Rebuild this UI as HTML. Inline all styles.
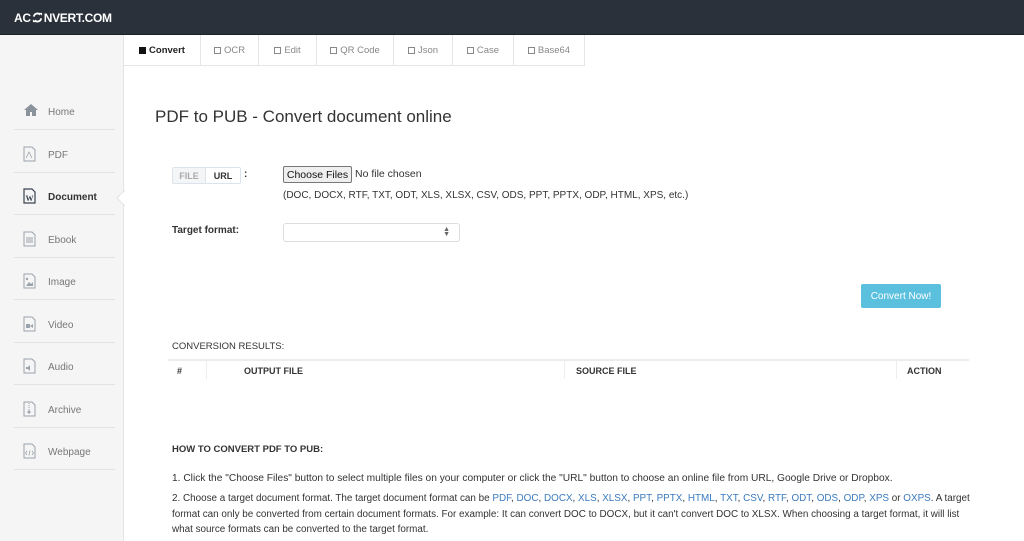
<!DOCTYPE html>
<html><head><meta charset="utf-8"><style>
*{box-sizing:border-box;margin:0;padding:0}
body{width:1024px;height:541px;overflow:hidden;background:#fff;font-family:"Liberation Sans",sans-serif;color:#333;position:relative}
.hdr{position:absolute;left:0;top:0;width:1024px;height:35px;background:#2a313b;border-bottom:1px solid #1c2128}
.logo{position:absolute;left:14px;top:11px;color:#fff;font-weight:bold;font-size:12px;letter-spacing:-0.3px}
.side{position:absolute;left:0;top:35px;width:124px;height:506px;background:#f5f5f5;border-right:1px solid #e4e4e4}
.item{position:absolute;left:14px;width:101px;height:42px;border-bottom:1px solid #e2e2e2;font-size:10px;color:#777}
.item span{position:absolute;left:34px;top:19px}
.item svg{position:absolute;left:9px;top:15px}
.item.act{color:#333;font-weight:bold}
.tabs{position:absolute;left:124px;top:35px;height:31px;border-bottom:1px solid #e6e6e6;display:flex;border-right:1px solid #e6e6e6}
.tab{height:30px;border-right:1px solid #e6e6e6;font-size:9.5px;color:#888;display:flex;align-items:center;justify-content:center}
.tab i{display:inline-block;width:7px;height:7px;border:1px solid #888;margin-right:3px}
.tab.act{color:#222;font-weight:bold}
.tab.act i{background:#111;border-color:#111}
h1{position:absolute;left:155px;top:107px;font-weight:normal;font-size:17px;color:#333}
.t{position:absolute;font-size:10px;white-space:nowrap}
a{color:#3b7bbf;text-decoration:none}
</style></head><body>
<div class="hdr"><div class="logo">AC<svg width="11" height="11" viewBox="0 0 12 12" style="vertical-align:-1px;margin:0 1px"><path d="M2 5a4 4 0 0 1 7-2M10 7a4 4 0 0 1-7 2" stroke="#fff" stroke-width="2" fill="none"/><path d="M8 1l3 0 0 3zM4 11l-3 0 0-3z" fill="#fff"/></svg>NVERT.COM</div></div>
<div class="side">
<div class="item" style="top:53px;border-top:0"><svg width="16" height="14" viewBox="0 0 16 14"><path d="M8 1L1 7h2v6h4V9h2v4h4V7h2z" fill="#8a929c"/></svg><span>Home</span></div>
<div class="item" style="top:96px"><svg width="13" height="16" viewBox="0 0 13 16"><path d="M1 1h8l3 3v11H1z" fill="none" stroke="#9aa2ab"/><path d="M3 12l3-6 3 6" fill="none" stroke="#9aa2ab" stroke-width=".8"/></svg><span>PDF</span></div>
<div class="item act" style="top:138px"><svg width="13" height="16" viewBox="0 0 13 16"><path d="M1 1h8l3 3v11H1z" fill="none" stroke="#3a4350" stroke-width="1.2"/><text x="2.5" y="13" font-size="8" font-family="Liberation Serif" fill="#3a4350">W</text></svg><span>Document</span></div>
<div class="item" style="top:181px"><svg width="13" height="16" viewBox="0 0 13 16"><path d="M1 1h8l3 3v11H1z" fill="none" stroke="#9aa2ab"/><path d="M3 7h7M3 9h7M3 11h7" stroke="#9aa2ab"/></svg><span>Ebook</span></div>
<div class="item" style="top:223px"><svg width="13" height="16" viewBox="0 0 13 16"><path d="M1 1h8l3 3v11H1z" fill="none" stroke="#9aa2ab"/><path d="M3 13l3-4 2 2 2-2v4z" fill="#9aa2ab"/><circle cx="4" cy="6" r="1.2" fill="#9aa2ab"/></svg><span>Image</span></div>
<div class="item" style="top:266px"><svg width="13" height="16" viewBox="0 0 13 16"><path d="M1 1h8l3 3v11H1z" fill="none" stroke="#9aa2ab"/><rect x="3" y="8" width="4" height="4" fill="#9aa2ab"/><path d="M7 10l3-2v4z" fill="#9aa2ab"/></svg><span>Video</span></div>
<div class="item" style="top:308px"><svg width="13" height="16" viewBox="0 0 13 16"><path d="M1 1h8l3 3v11H1z" fill="none" stroke="#9aa2ab"/><path d="M3 9h2l2-2v6l-2-2H3z" fill="#9aa2ab"/></svg><span>Audio</span></div>
<div class="item" style="top:351px"><svg width="13" height="16" viewBox="0 0 13 16"><path d="M1 1h8l3 3v11H1z" fill="none" stroke="#9aa2ab"/><path d="M6 2v7" stroke="#9aa2ab" stroke-dasharray="1 1"/><circle cx="6" cy="11" r="1.5" fill="#9aa2ab"/></svg><span>Archive</span></div>
<div class="item" style="top:393px"><svg width="13" height="16" viewBox="0 0 13 16"><path d="M1 1h8l3 3v11H1z" fill="none" stroke="#9aa2ab"/><path d="M4 8l-1.5 2 1.5 2M9 8l1.5 2L9 12M7 7.5l-1 5" fill="none" stroke="#9aa2ab" stroke-width=".8"/></svg><span>Webpage</span></div>
</div>
<svg style="position:absolute;left:116px;top:190px" width="9" height="16"><path d="M9 0L1 8l8 8z" fill="#fff"/><path d="M9 0L1 8l8 8" fill="none" stroke="#e4e4e4"/></svg>
<div class="tabs">
<div class="tab act" style="width:77px"><i></i>Convert</div>
<div class="tab" style="width:58px"><i></i>OCR</div>
<div class="tab" style="width:58px"><i></i>Edit</div>
<div class="tab" style="width:77px"><i></i>QR Code</div>
<div class="tab" style="width:59px"><i></i>Json</div>
<div class="tab" style="width:61px"><i></i>Case</div>
<div class="tab" style="width:70px;border-right:0"><i></i>Base64</div>
</div>
<h1>PDF to PUB - Convert document online</h1>
<div style="position:absolute;left:172px;top:167px;width:69px;height:17px;border:1px solid #dde3ea;border-radius:2px;font-size:9px;font-weight:bold;display:flex">
<div style="width:33px;background:#f3f5f7;color:#aaa;display:flex;align-items:center;justify-content:center;border-right:1px solid #dde3ea">FILE</div>
<div style="flex:1;color:#333;display:flex;align-items:center;justify-content:center">URL</div></div>
<div class="t" style="left:244px;top:169px;font-weight:bold">:</div>
<div style="position:absolute;left:283px;top:166px;width:69px;height:17px;border:1px solid #777;border-radius:2px;background:#efefef;font-size:10.5px;display:flex;align-items:center;justify-content:center;color:#111">Choose Files</div>
<div class="t" style="left:355px;top:168px;font-size:10.5px">No file chosen</div>
<div class="t" style="left:283px;top:190px;font-size:10px">(DOC, DOCX, RTF, TXT, ODT, XLS, XLSX, CSV, ODS, PPT, PPTX, ODP, HTML, XPS, etc.)</div>
<div class="t" style="left:172px;top:225px;font-weight:bold;font-size:10px">Target format:</div>
<div style="position:absolute;left:283px;top:223px;width:177px;height:19px;border:1px solid #ddd;border-radius:3px"><span style="position:absolute;right:9px;top:3px;font-size:7px;color:#666;line-height:5px">▲<br>▼</span></div>
<div style="position:absolute;left:861px;top:284px;width:80px;height:24px;background:#5bc0de;border-radius:2px;color:#fff;font-size:10px;display:flex;align-items:center;justify-content:center">Convert Now!</div>
<div class="t" style="left:172px;top:341px;font-size:9.5px">CONVERSION RESULTS:</div>
<div style="position:absolute;left:168px;top:359px;width:801px;height:2px;background:#ececec"></div>
<div style="position:absolute;left:206px;top:361px;width:1px;height:18px;background:#eee"></div>
<div style="position:absolute;left:564px;top:361px;width:1px;height:18px;background:#eee"></div>
<div style="position:absolute;left:896px;top:361px;width:1px;height:18px;background:#eee"></div>
<div class="t" style="left:177px;top:366px;font-size:9px;font-weight:bold">#</div>
<div class="t" style="left:244px;top:366px;font-size:9px;font-weight:bold">OUTPUT FILE</div>
<div class="t" style="left:576px;top:366px;font-size:9px;font-weight:bold">SOURCE FILE</div>
<div class="t" style="left:907px;top:366px;font-size:9px;font-weight:bold">ACTION</div>
<div class="t" style="left:172px;top:444px;font-size:9.5px;font-weight:bold">HOW TO CONVERT PDF TO PUB:</div>
<div class="t" style="left:172px;top:473px;font-size:10.2px">1. Click the "Choose Files" button to select multiple files on your computer or click the "URL" button to choose an online file from URL, Google Drive or Dropbox.</div>
<div style="position:absolute;left:172px;top:491px;width:800px;font-size:9.9px;line-height:15.5px">2. Choose a target document format. The target document format can be <a>PDF</a>, <a>DOC</a>, <a>DOCX</a>, <a>XLS</a>, <a>XLSX</a>, <a>PPT</a>, <a>PPTX</a>, <a>HTML</a>, <a>TXT</a>, <a>CSV</a>, <a>RTF</a>, <a>ODT</a>, <a>ODS</a>, <a>ODP</a>, <a>XPS</a> or <a>OXPS</a>. A target format can only be converted from certain document formats. For example: It can convert DOC to DOCX, but it can't convert DOC to XLSX. When choosing a target format, it will list what source formats can be converted to the target format.</div>
</body></html>
